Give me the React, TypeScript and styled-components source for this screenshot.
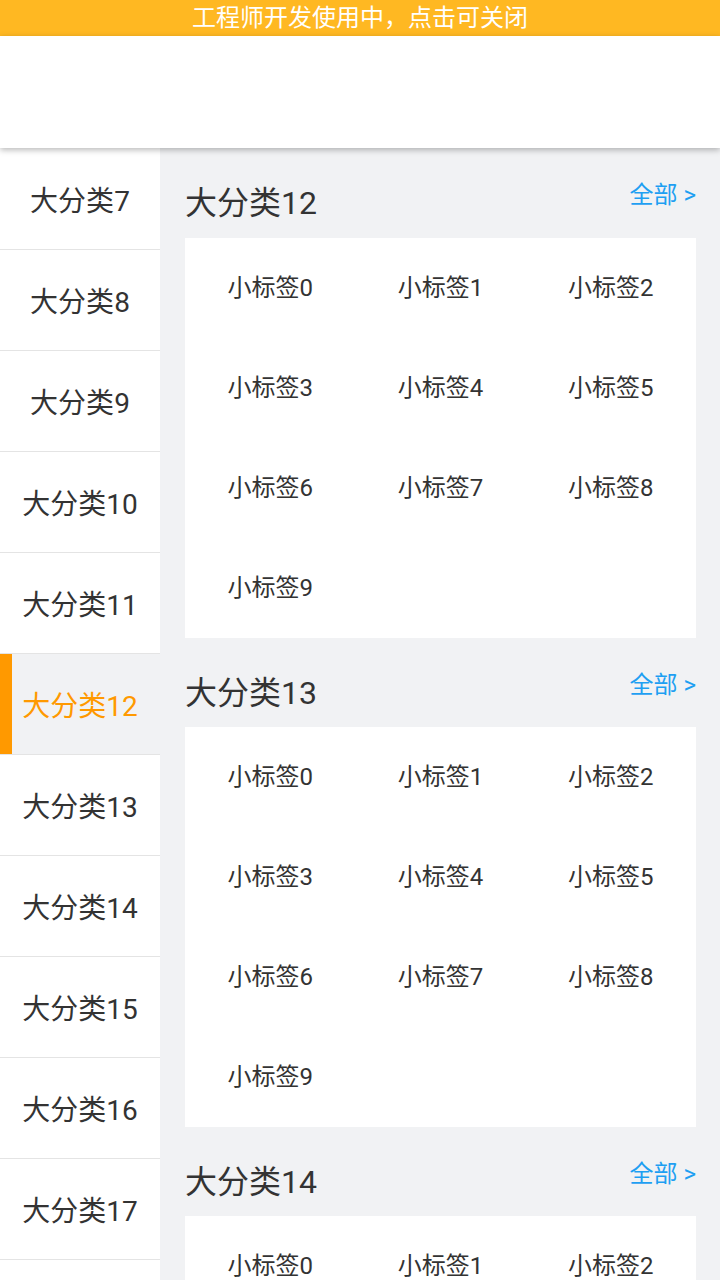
import React from "react";
import styled, { createGlobalStyle } from "styled-components";

const Global = createGlobalStyle`
  html, body { margin: 0; padding: 0; background: #ffffff; }
  body { font-family: Roboto, "Noto Sans CJK SC", "Noto Sans", sans-serif; }
  * { box-sizing: border-box; }
`;

const Page = styled.div`
  width: 720px;
  height: 1280px;
  overflow: hidden;
  display: flex;
  flex-direction: column;
  background: #f1f2f4;
`;

const DevBanner = styled.div`
  height: 36px;
  flex: none;
  background: #ffb822;
  color: #ffffff;
  font-size: 24px;
  line-height: 36px;
  text-align: center;
`;

const Header = styled.div`
  height: 112px;
  flex: none;
  background: #ffffff;
  box-shadow: 0 2px 6px rgba(0, 0, 0, 0.28);
  position: relative;
  z-index: 2;
`;

const Body = styled.div`
  flex: 1;
  display: flex;
  min-height: 0;
`;

const Sidebar = styled.div`
  width: 160px;
  flex: none;
  background: #ffffff;
  display: flex;
  flex-direction: column;
  padding-top: 1px;
`;

const SideItem = styled.div<{ $active?: boolean }>`
  position: relative;
  height: 101px;
  flex: none;
  display: flex;
  align-items: center;
  justify-content: center;
  border-bottom: 1px solid #e4e4e4;
  font-size: 28px;
  color: ${(p) => (p.$active ? "#ff9900" : "#333333")};
  background: ${(p) => (p.$active ? "#f1f2f4" : "#ffffff")};

  &::before {
    content: "";
    display: ${(p) => (p.$active ? "block" : "none")};
    position: absolute;
    left: 0;
    top: 0;
    bottom: 0;
    width: 12px;
    background: #ff9900;
  }
`;

const Content = styled.div`
  flex: 1;
  padding: 0 24px 0 25px;
  display: flex;
  flex-direction: column;
`;

const Section = styled.div`
  display: flex;
  flex-direction: column;
`;

const SectionHead = styled.div<{ $first?: boolean }>`
  height: ${(p) => (p.$first ? "90px" : "89px")};
  display: flex;
  align-items: flex-start;
  justify-content: space-between;
`;

const SectionTitle = styled.div`
  font-size: 32px;
  color: #333333;
  line-height: 40px;
  margin-top: 35px;
`;

const AllLink = styled.div`
  font-size: 24px;
  color: #1e9ff2;
  line-height: 30px;
  margin-top: 32px;
`;

const Card = styled.div`
  background: #ffffff;
  display: grid;
  grid-template-columns: repeat(3, 1fr);
  grid-auto-rows: 100px;
`;

const Tag = styled.div`
  display: flex;
  align-items: center;
  justify-content: center;
  font-size: 24px;
  color: #333333;
  padding-bottom: 5px;
`;

const sideCats = Array.from({ length: 12 }, (_, i) => i + 7);
const sections = [12, 13, 14];
const tags = Array.from({ length: 10 }, (_, i) => i);

export default function App() {
  return (
    <>
      <Global />
      <Page>
        <DevBanner>工程师开发使用中，点击可关闭</DevBanner>
        <Header />
        <Body>
          <Sidebar>
            {sideCats.map((n) => (
              <SideItem key={n} $active={n === 12}>
                大分类{n}
              </SideItem>
            ))}
          </Sidebar>
          <Content>
            {sections.map((s, idx) => (
              <Section key={s}>
                <SectionHead $first={idx === 0}>
                  <SectionTitle>大分类{s}</SectionTitle>
                  <AllLink>全部 &gt;</AllLink>
                </SectionHead>
                <Card>
                  {tags.map((t) => (
                    <Tag key={t}>小标签{t}</Tag>
                  ))}
                </Card>
              </Section>
            ))}
          </Content>
        </Body>
      </Page>
    </>
  );
}
